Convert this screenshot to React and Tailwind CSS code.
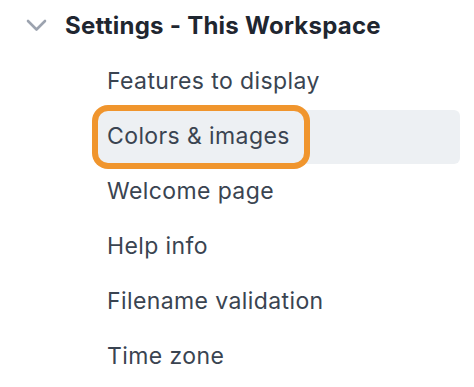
export default function App() {
  const items = [
    "Features to display",
    "Colors & images",
    "Welcome page",
    "Help info",
    "Filename validation",
    "Time zone",
  ];
  return (
    <div
      className="w-[474px] h-[387px] bg-white overflow-hidden"
      style={{ fontFamily: "Inter, 'Noto Sans', sans-serif" }}
    >
      <div className="flex items-center h-[51px] pl-[26px] gap-[18px]">
        <svg width="21" height="13" viewBox="0 0 21 13" fill="none">
          <path
            d="M2 2 L10.5 10.5 L19 2"
            stroke="#9ca3af"
            strokeWidth="2.6"
            strokeLinecap="round"
            strokeLinejoin="round"
          />
        </svg>
        <span className="text-[24px] font-bold text-[#1f2630] tracking-[0.25px]">
          Settings - This Workspace
        </span>
      </div>
      <div className="flex flex-col pl-[97px] pr-[14px] pt-[3px]">
        {items.map((t, i) =>
          i === 1 ? (
            <div
              key={t}
              className="h-[54px] my-[0.5px] flex items-center rounded-[6px] bg-[#edf0f3]"
            >
              <span className="ml-px h-[52px] w-[206px] flex items-center pl-[9px] rounded-[10px] ring-[6px] ring-[#f0952d] text-[23px] tracking-[0.4px] text-[#3a4451]">
                {t}
              </span>
            </div>
          ) : (
            <div
              key={t}
              className="h-[55px] flex items-center px-[10px] text-[23px] tracking-[0.4px] text-[#3a4451]"
            >
              {t}
            </div>
          )
        )}
      </div>
    </div>
  );
}
